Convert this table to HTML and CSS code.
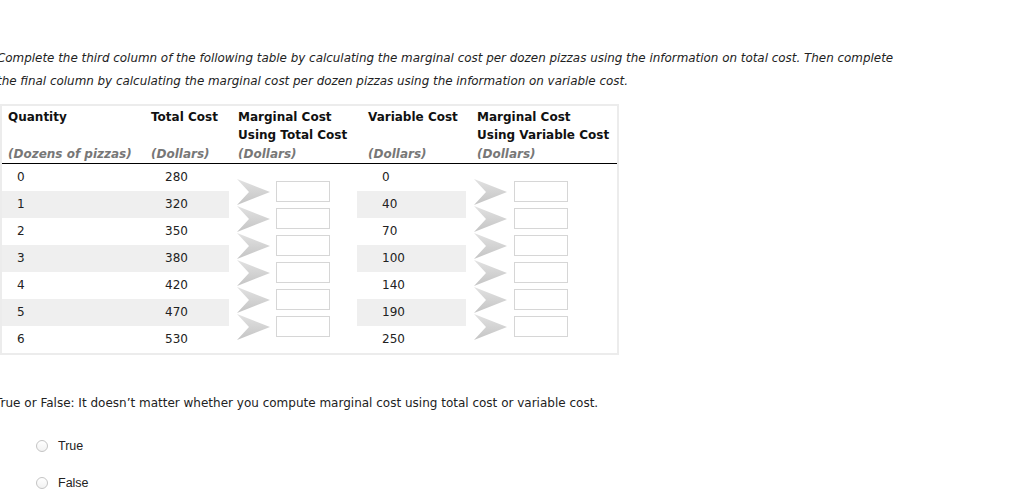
FILE: index.html
```html
<!DOCTYPE html>
<html>
<head>
<meta charset="utf-8">
<link rel="stylesheet" href="styles.css">
</head>
<body>
<svg class="defs" width="0" height="0">
  <defs>
    <linearGradient id="ag" x1="0" y1="0" x2="0" y2="1">
      <stop offset="0" stop-color="#e2e2e2"/>
      <stop offset="1" stop-color="#c4c4c4"/>
    </linearGradient>
  </defs>
</svg>
<div class="page">
  <p class="intro">Complete the third column of the following table by calculating the marginal cost per dozen pizzas using the information on total cost. Then complete<br>the final column by calculating the marginal cost per dozen pizzas using the information on variable cost.</p>

  <div class="tbl">
    <div class="hd c1"><div class="ttl">Quantity</div><div class="sub">(Dozens of pizzas)</div></div>
    <div class="hd c2"><div class="ttl">Total Cost</div><div class="sub">(Dollars)</div></div>
    <div class="hd c3"><div class="ttl">Marginal Cost<br>Using Total Cost</div><div class="sub">(Dollars)</div></div>
    <div class="hd c4"><div class="ttl">Variable Cost</div><div class="sub">(Dollars)</div></div>
    <div class="hd c5"><div class="ttl">Marginal Cost<br>Using Variable Cost</div><div class="sub">(Dollars)</div></div>

    <div class="cell q">0</div><div class="cell t">280</div>
    <div class="mc mc1">
      <div class="step"><svg class="arr" viewBox="0 0 33 26"><polygon points="0,0 33,13 0,26 12,13" fill="url(#ag)"/></svg><input class="box" type="text"></div>
      <div class="step"><svg class="arr" viewBox="0 0 33 26"><polygon points="0,0 33,13 0,26 12,13" fill="url(#ag)"/></svg><input class="box" type="text"></div>
      <div class="step"><svg class="arr" viewBox="0 0 33 26"><polygon points="0,0 33,13 0,26 12,13" fill="url(#ag)"/></svg><input class="box" type="text"></div>
      <div class="step"><svg class="arr" viewBox="0 0 33 26"><polygon points="0,0 33,13 0,26 12,13" fill="url(#ag)"/></svg><input class="box" type="text"></div>
      <div class="step"><svg class="arr" viewBox="0 0 33 26"><polygon points="0,0 33,13 0,26 12,13" fill="url(#ag)"/></svg><input class="box" type="text"></div>
      <div class="step"><svg class="arr" viewBox="0 0 33 26"><polygon points="0,0 33,13 0,26 12,13" fill="url(#ag)"/></svg><input class="box" type="text"></div>
    </div>
    <div class="cell v">0</div>
    <div class="mc mc2">
      <div class="step"><svg class="arr" viewBox="0 0 33 26"><polygon points="0,0 33,13 0,26 12,13" fill="url(#ag)"/></svg><input class="box" type="text"></div>
      <div class="step"><svg class="arr" viewBox="0 0 33 26"><polygon points="0,0 33,13 0,26 12,13" fill="url(#ag)"/></svg><input class="box" type="text"></div>
      <div class="step"><svg class="arr" viewBox="0 0 33 26"><polygon points="0,0 33,13 0,26 12,13" fill="url(#ag)"/></svg><input class="box" type="text"></div>
      <div class="step"><svg class="arr" viewBox="0 0 33 26"><polygon points="0,0 33,13 0,26 12,13" fill="url(#ag)"/></svg><input class="box" type="text"></div>
      <div class="step"><svg class="arr" viewBox="0 0 33 26"><polygon points="0,0 33,13 0,26 12,13" fill="url(#ag)"/></svg><input class="box" type="text"></div>
      <div class="step"><svg class="arr" viewBox="0 0 33 26"><polygon points="0,0 33,13 0,26 12,13" fill="url(#ag)"/></svg><input class="box" type="text"></div>
    </div>

    <div class="cell q alt">1</div><div class="cell t alt">320</div><div class="cell v alt">40</div>
    <div class="cell q">2</div><div class="cell t">350</div><div class="cell v">70</div>
    <div class="cell q alt">3</div><div class="cell t alt">380</div><div class="cell v alt">100</div>
    <div class="cell q">4</div><div class="cell t">420</div><div class="cell v">140</div>
    <div class="cell q alt">5</div><div class="cell t alt">470</div><div class="cell v alt">190</div>
    <div class="cell q">6</div><div class="cell t">530</div><div class="cell v">250</div>
  </div>

  <p class="question">True or False: It doesn’t matter whether you compute marginal cost using total cost or variable cost.</p>

  <div class="options">
    <label class="opt"><span class="radio"></span>True</label>
    <label class="opt"><span class="radio"></span>False</label>
  </div>
</div>
</body>
</html>
```

FILE: styles.css
```css
html, body {
  margin: 0;
  padding: 0;
  background: #fff;
}
.defs {
  position: absolute;
  width: 0;
  height: 0;
}
.page {
  font-family: "DejaVu Sans", Verdana, sans-serif;
  font-size: 12px;
  color: #222;
  padding-top: 47px;
}
.intro {
  margin: 0 0 0 -3px;
  font-style: italic;
  line-height: 23px;
  font-size: 11.92px;
}
.tbl {
  margin-top: 11px;
  width: 615px;
  display: grid;
  grid-template-columns: 142px 85px 128px 109px 151px;
  grid-template-rows: auto repeat(7, 27px);
  border: 2px solid #ececec;
}
.hd {
  padding-top: 2px;
  border-bottom: 1px solid #000;
  line-height: 18px;
  padding-bottom: 0;
}
.hd .ttl {
  font-weight: bold;
  min-height: 37px;
  color: #111;
}
.hd .sub {
  font-weight: bold;
  font-style: italic;
  color: #777;
}
.c1 { padding-left: 6px; }
.c2 { padding-left: 7px; }
.c3 { padding-left: 9px; }
.c4 { padding-left: 11px; }
.c5 { padding-left: 11px; }

.cell {
  line-height: 27px;
  height: 27px;
}
.alt { background: #efefef; }
.q { grid-column: 1; padding-left: 15px; }
.t { grid-column: 2; padding-left: 21px; }
.v { grid-column: 4; padding-left: 25px; }
.mc {
  grid-row: 2 / span 7;
  display: flex;
  flex-direction: column;
  padding-top: 14px;
}
.mc1 { grid-column: 3; padding-left: 8px; }
.mc2 { grid-column: 5; padding-left: 8px; }
.step {
  height: 27px;
  display: flex;
  align-items: center;
  gap: 6px;
}
.mc2 .step { gap: 7px; }
.arr {
  width: 33px;
  height: 26px;
  overflow: visible;
  flex: none;
}
.box {
  width: 54px;
  height: 21px;
  box-sizing: border-box;
  border: 1px solid #d6d6d6;
  margin: 0;
  padding: 0;
  background: #fff;
}
.question {
  margin: 39px 0 0 -5px;
  line-height: 18px;
}
.options {
  display: flex;
  flex-direction: column;
  gap: 19px;
  margin-top: 25px;
  padding-left: 36px;
}
.opt {
  display: flex;
  align-items: center;
  gap: 10px;
  height: 18px;
  font-family: "Liberation Sans", Arial, sans-serif;
  font-size: 12.5px;
}
.radio {
  width: 12px;
  height: 12px;
  border: 1px solid #c4c4c4;
  border-radius: 50%;
  background: linear-gradient(#fff, #f2f2f2);
  box-sizing: border-box;
}
```
